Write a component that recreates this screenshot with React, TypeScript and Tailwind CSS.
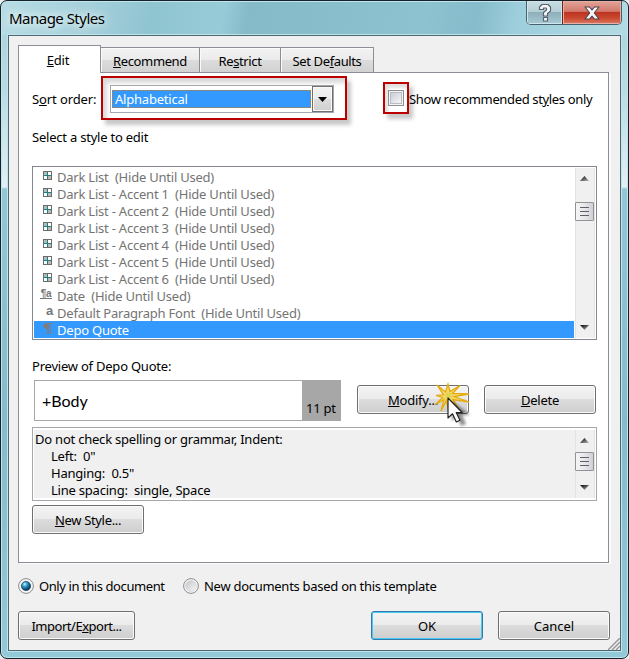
import React from "react";

const styles = [
  "Dark List  (Hide Until Used)",
  "Dark List - Accent 1  (Hide Until Used)",
  "Dark List - Accent 2  (Hide Until Used)",
  "Dark List - Accent 3  (Hide Until Used)",
  "Dark List - Accent 4  (Hide Until Used)",
  "Dark List - Accent 5  (Hide Until Used)",
  "Dark List - Accent 6  (Hide Until Used)",
  "Date  (Hide Until Used)",
  "Default Paragraph Font  (Hide Until Used)",
  "Depo Quote",
];

function GridIcon() {
  return (
    <svg width="9" height="9" viewBox="0 0 9 9" className="mt-[3px] ml-[9px] shrink-0" shapeRendering="crispEdges">
      <rect width="9" height="9" fill="#6c6c6c" />
      <path d="M1 1h3v3H1zM5 5h3v3H5z" fill="#b9b9b9" />
      <path d="M5 1h3v3H5zM1 5h3v3H1z" fill="#fff" />
      <path d="M4 1h1v7H4zM1 4h7v1H1z" fill="#188080" />
    </svg>
  );
}

function RowIcon({ index }: { index: number }) {
  if (index < 7) return <GridIcon />;
  if (index === 7)
    return (
      <span className="ml-[6px] mt-[2px] w-[12px] h-[10px] flex items-center justify-center border-b border-[#777] font-['Liberation_Sans',sans-serif] text-[10px] font-bold leading-none tracking-[-0.2px] text-[#777]">
        ¶a
      </span>
    );
  if (index === 8)
    return (
      <span className="ml-[12px] mt-px font-['Liberation_Sans',sans-serif] text-[13px] font-bold leading-[11px] text-[#777]">a</span>
    );
  return (
    <svg width="9" height="11" viewBox="0 0 9 11" className="ml-[9px] mt-[2px] shrink-0" shapeRendering="crispEdges">
      <path d="M2 0h7v1H8v10H7V1H6v10H4V6H2V5H1V4H0V2h1V1h1z" fill="#7d7d7d" />
    </svg>
  );
}

function Btn({ children, className = "", focus = false }: { children: React.ReactNode; className?: string; focus?: boolean }) {
  return (
    <div
      className={`h-[29px] shrink-0 rounded-[3px] border bg-[linear-gradient(to_bottom,#f3f3f3,#ebebeb_48%,#dcdcdc_50%,#cecece)] flex items-center justify-center whitespace-pre pt-[2px] ${
        focus ? "border-[#3379a9] shadow-[inset_0_0_0_1px_#48c9f3]" : "border-[#707070] shadow-[inset_0_0_0_1px_#fafafa]"
      } ${className}`}
    >
      {children}
    </div>
  );
}

function Arrow({ up = false }: { up?: boolean }) {
  return (
    <svg width="9" height="5" viewBox="0 0 9 5" className="shrink-0">
      <defs>
        <linearGradient id={up ? "au" : "ad"} x1="0" y1="0" x2="1" y2="1">
          <stop offset="0.2" stopColor="#222" />
          <stop offset="1" stopColor="#bbb" />
        </linearGradient>
      </defs>
      <path d={up ? "M0 5 4.5 0 9 5z" : "M0 0h9L4.5 5z"} fill={up ? "url(#au)" : "url(#ad)"} />
    </svg>
  );
}

function ScrollBar({ tall = false }: { tall?: boolean }) {
  return (
    <div className="w-[20px] shrink-0 flex flex-col items-center border-x border-[#e3e3e3] bg-[#f0f0f0] pr-px py-[8px]">
      <Arrow up />
      <div
        className={`w-[19px] h-[19px] shrink-0 rounded-[1px] border border-[#929297] bg-[linear-gradient(to_right,#f5f5f5,#e8e8eb_50%,#cfcfd6)] flex flex-col items-center justify-center gap-[3px] ${
          tall ? "mt-[21px]" : "mt-[9px]"
        }`}
      >
        <div className="w-[9px] h-px bg-[#606068]" />
        <div className="w-[9px] h-px bg-[#606068]" />
        <div className="w-[9px] h-px bg-[#606068]" />
      </div>
      <div className="grow" />
      <Arrow />
    </div>
  );
}

function Tab({ children, className }: { children: React.ReactNode; className: string }) {
  return (
    <div
      className={`h-[25px] shrink-0 border border-b-0 border-[#8c8e97] bg-[linear-gradient(to_bottom,#f3f3f3,#ebebeb_48%,#dcdcdc_50%,#d2d2d2)] shadow-[inset_1px_1px_0_#fafafa] flex items-center justify-center pt-[3px] tracking-[-0.38px] ${className}`}
    >
      {children}
    </div>
  );
}

function Radio({ on = false }: { on?: boolean }) {
  return (
    <svg width="16" height="16" viewBox="0 0 16 16" className="shrink-0">
      <defs>
        <radialGradient id="ball" cx="0.36" cy="0.3" r="0.75">
          <stop offset="0" stopColor="#d3f5fc" />
          <stop offset="0.3" stopColor="#3ba9d2" />
          <stop offset="0.65" stopColor="#12618d" />
          <stop offset="1" stopColor="#062940" />
        </radialGradient>
        <linearGradient id="dish" x1="0" y1="0" x2="1" y2="1">
          <stop offset="0" stopColor="#c3c5c9" />
          <stop offset="1" stopColor="#f7f7f7" />
        </linearGradient>
      </defs>
      <circle cx="8" cy="8" r="7.4" fill="#f6f6f6" stroke="#8b8c8d" />
      {on ? (
        <circle cx="8" cy="8" r="4.6" fill="url(#ball)" stroke="#17384f" strokeWidth="0.7" />
      ) : (
        <circle cx="8" cy="8" r="5.4" fill="url(#dish)" stroke="#d0d0d2" strokeWidth="0.6" />
      )}
    </svg>
  );
}

function ClickCursor() {
  return (
    <svg width="44" height="50" viewBox="0 0 44 50" className="absolute left-[75px] -top-[4px] overflow-visible">
      <defs>
        <filter id="soft" x="-40%" y="-40%" width="200%" height="200%">
          <feGaussianBlur stdDeviation="1.8" />
        </filter>
      </defs>
      <path
        d="M5 4 13.500 11 16 3 18 10.500 28 4.500 20.500 12.500 37 13 22 15.500 37 21 21 18.500 26 27 18 20 16 28 14.500 19.500 9 30 12 18.500 3.500 23.500 10.500 16.500 4 14.500 11.500 13.800z"
        fill="#f2d96a"
        stroke="#e6ab0e"
        strokeWidth="1.300"
      />
      <circle cx="16.500" cy="14.500" r="3" fill="#d9d048" opacity="0.7" />
      <path d="M20 20v20l5-5 4 10 5-2-4-9h8z" fill="#000" opacity="0.45" filter="url(#soft)" />
      <path d="M16 17v20l4.500-4.200 3.800 8.200 3.700-1.800-3.800-7.700h6z" fill="#fff" stroke="#222" strokeWidth="1.2" strokeLinejoin="round" />
    </svg>
  );
}

export default function App() {
  return (
    <div className="w-[629px] h-[659px] bg-[#e8eff0] font-['Noto_Sans','Open_Sans',sans-serif] text-[13px] leading-[17px] tracking-[-0.22px] text-black">
      <div className="w-full h-full overflow-hidden rounded-[7px] border border-[#17212a] bg-[linear-gradient(to_bottom,#a9d1da_0px,#b9dce4_90px,#e2f0f5_186px,#92c8d6_188px,#84bccb_420px,#94c9d7_659px)] shadow-[inset_0_0_0_1px_#bfe5ee] px-[7px]">
        <header className="h-[33px] -mx-[6px] mt-px pl-[7px] pr-[6px] flex items-start justify-between bg-[linear-gradient(100deg,#b7dce4_0px,#a4d0db_90px,#8fc4d1_150px,#98cbd8_220px,#85bac9_245px,#8dc3d0_420px,#86bccb_470px,#9dcedb_510px,#b4dbe4_627px)] rounded-t-[6px]">
          <h1 className="mt-[7px] text-[15px] leading-[19px] tracking-[-0.52px] [text-shadow:0_0_8px_#fff,0_0_12px_#e8f8fb]">Manage Styles</h1>
          <div className="flex h-[24px] w-[96px] mr-[-1px] -mt-px overflow-hidden rounded-b-[5px] border border-t-0 border-[#46606c]">
            <div className="w-[35px] flex items-center justify-center bg-[linear-gradient(to_bottom,#c9dde2,#b4ced5_48%,#8fafba_50%,#a7cad3)] shadow-[inset_0_0_0_1px_#cfe7ed]">
              <svg width="14" height="20" viewBox="0 0 14 20">
                <path
                  d="M1.500 6.500V4L4 1.500h6L12.500 4v4L9.500 10.500V13h-4V9.500L8.500 7V5h-3v1.500zM5.500 14.500h4v3.500h-4z"
                  fill="#f8f8f8"
                  stroke="#566570"
                  strokeWidth="1.200"
                  strokeLinejoin="round"
                />
              </svg>
            </div>
            <div className="grow flex items-center justify-center border-l border-[#682217] bg-[linear-gradient(to_bottom,#e2a499,#d27b6c_45%,#bd3422_50%,#cb4930_75%,#dc7b65)] shadow-[inset_0_0_0_1px_#e8afa4]">
              <svg width="16" height="14" viewBox="0 0 16 14">
                <path
                  d="M1 1h4.500L8 3.800 10.500 1H15l-4.800 6 4.800 6h-4.500L8 10.200 5.500 13H1l4.800-6z"
                  fill="#f7f7f7"
                  stroke="#4c4550"
                  strokeWidth="1.100"
                  strokeLinejoin="round"
                />
              </svg>
            </div>
          </div>
        </header>

        <main className="relative h-[616px] w-[613px] border border-[#4d6871] bg-[#f0f0f0] pl-[9px] pt-[9px] shadow-[0_0_0_1px_#c1e4ec]">
          <nav className="flex h-[27px] items-end">
            <div className="relative z-10 w-[83px] h-[28px] -mb-px shrink-0 border border-b-0 border-[#8c8e97] bg-white flex items-center justify-center pt-[2px] pr-[3px]">
              <u>E</u>dit
            </div>
            <Tab className="w-[100px] -ml-px">
              <u>R</u>ecommend
            </Tab>
            <Tab className="w-[82px] -ml-px">
              Re<u>s</u>trict
            </Tab>
            <Tab className="w-[94px] -ml-px">
              Set De<u>f</u>aults
            </Tab>
          </nav>

          <section className="w-[591px] h-[491px] border border-[#8c8e97] bg-white shadow-[2px_1px_0_#fafafa] pl-[13px] pt-[3px]">
            <div className="flex h-[44px]">
              <span className="w-[69px] pt-[15px] tracking-[-0.1px] whitespace-nowrap">
                S<u>o</u>rt order:
              </span>
              <div className="w-[246px] h-[44px] border-2 border-[#bb0000] shadow-[4px_5px_4px_#00000038,inset_4px_5px_4px_#00000026] pl-[7px] pt-[7px]">
                <div className="w-[224px] h-[28px] flex border border-[#a5a7ac] bg-white">
                  <div className="mt-[4px] ml-px w-[200px] h-[18px] border border-dotted border-[#d27b19] bg-[#3399ff] text-white pl-[2px] leading-[17px]">Alphabetical</div>
                  <div className="ml-px w-[21px] h-[26px] border border-[#707070] bg-[linear-gradient(to_bottom,#f2f2f2,#ebebeb_48%,#dddddd_50%,#cfcfcf)] flex items-center justify-center shadow-[inset_0_0_0_1px_#fafafa]">
                    <svg width="9" height="5" viewBox="0 0 9 5">
                      <path d="M0 0h9L4.500 5z" fill="#000" />
                    </svg>
                  </div>
                </div>
              </div>
              <div className="ml-[36px] mt-[6px] w-[26px] h-[32px] border-2 border-[#bb0000] shadow-[4px_5px_4px_#00000038,inset_3px_4px_3px_#00000020] flex items-center justify-center">
                <div className="w-[16px] h-[16px] shrink-0 border border-[#8e8f8f] bg-[#f4f4f4] p-px">
                  <div className="w-full h-full border border-[#b8bdc5] bg-[linear-gradient(135deg,#c9ced6,#f6f6f6)]" />
                </div>
              </div>
              <span className="relative pt-[15px] whitespace-nowrap tracking-[-0.35px]">
                Show recommended st<u>y</u>les only
              </span>
            </div>

            <div className="mt-[9px] h-[18px]">Select a style to edit</div>

            <div className="mt-[19px] w-[565px] h-[174px] border border-[#828790] bg-white p-px flex">
              <div className="w-[540px] mr-px">
                {styles.map((s, i) => (
                  <div key={s} className={`flex h-[17px] whitespace-pre ${i === 9 ? "bg-[#3399ff] text-white" : "text-[#747474]"}`}>
                    <div className="w-[23px] h-[17px] flex items-start shrink-0">
                      <RowIcon index={i} />
                    </div>
                    <span className="pt-px">{s}</span>
                  </div>
                ))}
              </div>
              <ScrollBar tall />
            </div>

            <div className="mt-[18px] h-[17px]">Preview of Depo Quote:</div>

            <div className="mt-[5px] flex h-[41px]">
              <div className="ml-[2px] w-[307px] h-[41px] border border-[#a7a7a7] flex items-center justify-between bg-white">
                <span className="pl-[7px] font-['Lato','Open_Sans',sans-serif] text-[16px] leading-[20px] tracking-normal">+Body</span>
                <span className="h-full w-[38px] bg-[#a7a7a7] pl-[4px] pt-[19px] whitespace-nowrap">11 pt</span>
              </div>
              <div className="relative ml-[16px] mt-[5px]">
                <Btn className="w-[112px]">
                  <u>M</u>odify...
                </Btn>
                <ClickCursor />
              </div>
              <Btn className="ml-[15px] mt-[5px] w-[112px]">
                <u>D</u>elete
              </Btn>
            </div>

            <div className="mt-[6px] w-[565px] h-[74px] border border-[#a5a7ac] bg-white px-px py-[2px] flex">
              <div className="w-[541px] bg-[#f0f0f0] pl-px pt-px whitespace-pre">
                <div>Do not check spelling or grammar, Indent:</div>
                <div className="pl-[16px]">Left:  0"</div>
                <div className="pl-[16px]">Hanging:  0.5"</div>
                <div className="pl-[16px]">Line spacing:  single, Space</div>
              </div>
              <ScrollBar />
            </div>

            <Btn className="mt-[4px] w-[112px] tracking-[-0.33px]">
              <u>N</u>ew Style...
            </Btn>
          </section>

          <div className="mt-[14px] h-[17px] flex items-center">
            <Radio on />
            <span className="ml-[5px] w-[144px] whitespace-nowrap pt-[2px] tracking-[-0.42px]">Only in this document</span>
            <Radio />
            <span className="ml-[5px] whitespace-nowrap pt-[2px] tracking-[-0.28px]">New documents based on this template</span>
          </div>

          <footer className="mt-[17px] flex">
            <Btn className="w-[117px] tracking-[-0.48px]">
              Import/E<u>x</u>port...
            </Btn>
            <Btn focus className="ml-[236px] w-[112px]">
              OK
            </Btn>
            <Btn className="ml-[15px] w-[112px] tracking-normal">Cancel</Btn>
          </footer>
          <svg width="12" height="12" viewBox="0 0 12 12" className="absolute right-0 bottom-0">
            <path d="M0 12 12 0M4 12 12 4M8 12l4-4" stroke="#999" strokeWidth="1.500" />
          </svg>
        </main>
      </div>
    </div>
  );
}
